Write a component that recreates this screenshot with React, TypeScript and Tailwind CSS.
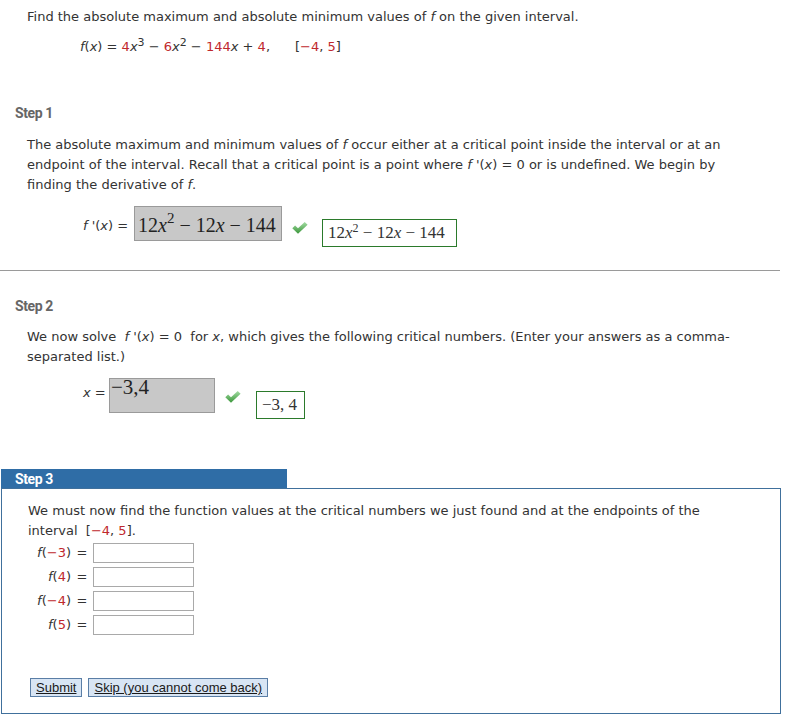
import React from "react";

const R = ({ children }: { children: React.ReactNode }) => (
  <span className="text-[#c0282d]">{children}</span>
);
const I = ({ children }: { children: React.ReactNode }) => <i>{children}</i>;

const Check = ({ className = "" }: { className?: string }) => (
  <svg width="16" height="12" viewBox="0 0 16 12" className={className}>
    <defs>
      <linearGradient id="cg" x1="0" y1="0" x2="0" y2="1">
        <stop offset="0" stopColor="#a3dca3" />
        <stop offset="1" stopColor="#3a963a" />
      </linearGradient>
    </defs>
    <path d="M0.3 6.2 L3.1 3.5 L6 6.3 L12.7 0 L15.6 2.7 L6 11.8 Z" fill="url(#cg)" />
  </svg>
);

const Heading = ({ children, className = "" }: { children: React.ReactNode; className?: string }) => (
  <div
    className={`font-bold text-[14px] tracking-[-0.4px] leading-[20px] ${className}`}
    style={{ fontFamily: "Roboto, 'Liberation Sans', sans-serif" }}
  >
    {children}
  </div>
);

const serif = { fontFamily: "'Liberation Serif', 'Times New Roman', serif" };

export default function App() {
  return (
    <div
      className="w-[795px] h-[722px] bg-white text-[#333] text-[13px] leading-[20px] overflow-hidden"
      style={{ fontFamily: "'DejaVu Sans', Verdana, sans-serif" }}
    >
      <div className="pt-[7px] pl-[27px]">
        Find the absolute maximum and absolute minimum values of <I>f</I> on the given interval.
      </div>
      <div className="mt-[10px] pl-[80px] whitespace-pre">
        <I>f</I>(<I>x</I>) = <R>4</R>
        <I>x</I>
        <sup className="text-[11px]">3</sup> − <R>6</R>
        <I>x</I>
        <sup className="text-[11px]">2</sup> − <R>144</R>
        <I>x</I> + <R>4</R>,
        <span className="ml-[25px]">
          [<R>−4</R>, <R>5</R>]
        </span>
      </div>

      {/* Step 1 */}
      <Heading className="mt-[46px] pl-[15px] text-[#666]">Step 1</Heading>
      <div className="mt-[12px] pl-[27px]">
        The absolute maximum and minimum values of <I>f</I> occur either at a critical point inside the interval or at an
        <br />
        endpoint of the interval. Recall that a critical point is a point where <I>f</I> '(<I>x</I>) = 0 or is undefined. We begin by
        <br />
        finding the derivative of <I>f</I>.
      </div>
      <div className="mt-[11px] pl-[83px] flex items-start">
        <div className="mt-[10px] w-[51px] whitespace-pre">
          <I>f</I> '(<I>x</I>) =
        </div>
        <div
          className="w-[148px] h-[35px] bg-[#c8c8c8] border border-[#9a9a9a] pl-[3px] text-[20px] leading-[37px] text-[#222] whitespace-pre"
          style={serif}
        >
          12<I>x</I>
          <span className="relative -top-[9px] text-[15px]">2</span> − 12<I>x</I> − 144
        </div>
        <Check className="ml-[10px] mt-[16px]" />
        <div
          className="ml-[14px] mt-[13px] w-[135px] h-[28px] border border-[#2b7a2b] pl-[5px] text-[17px] leading-[26px] text-[#333] whitespace-pre"
          style={serif}
        >
          12<I>x</I>
          <span className="relative -top-[6px] text-[12px]">2</span> − 12<I>x</I> − 144
        </div>
      </div>

      <div className="mt-[23px] h-px w-[780px] bg-[#9a9a9a]" />

      {/* Step 2 */}
      <Heading className="mt-[25px] pl-[15px] text-[#666]">Step 2</Heading>
      <div className="mt-[11px] pl-[27px]">
        We now solve&nbsp; <I>f</I> '(<I>x</I>) = 0&nbsp; for <I>x</I>, which gives the following critical numbers. (Enter your answers as a comma-
        <br />
        separated list.)
      </div>
      <div className="mt-[11px] pl-[83px] flex items-start">
        <div className="mt-[5px] w-[26px] whitespace-pre">
          <I>x</I> =
        </div>
        <div
          className="w-[106px] h-[35px] bg-[#c8c8c8] border border-[#9a9a9a] pl-[1px] text-[21px] leading-[16px] text-[#222]"
          style={serif}
        >
          −3,4
        </div>
        <Check className="ml-[10px] mt-[13px]" />
        <div
          className="ml-[15px] mt-[13px] w-[49px] h-[28px] border border-[#2b7a2b] pl-[5px] text-[17px] leading-[26px] text-[#333] whitespace-pre"
          style={serif}
        >
          −3, 4
        </div>
      </div>

      {/* Step 3 */}
      <div className="mt-[50px] ml-[1px] w-[286px] h-[19px] bg-[#2f6da6] pl-[14px]">
        <Heading className="text-white leading-[19px]">Step 3</Heading>
      </div>
      <div className="ml-[1px] w-[780px] h-[226px] border border-[#40709c] pt-[12px]">
        <div className="pl-[26px]">
          We must now find the function values at the critical numbers we just found and at the endpoints of the
          <br />
          interval&nbsp; [<R>−4</R>, <R>5</R>].
        </div>
        <div className="mt-[2px] pl-[26px] flex flex-col gap-[4px]">
          {["−3", "4", "−4", "5"].map((v) => (
            <div key={v} className="flex items-center h-[20px]">
              <div className="w-[43px] text-right">
                <I>f</I>(<R>{v}</R>)
              </div>
              <div className="w-[22px] text-center">=</div>
              <div className="w-[101px] h-[20px] border border-[#a9a9a9] bg-white" />
            </div>
          ))}
        </div>
        <div
          className="mt-[43px] ml-[28px] flex gap-[6px] text-[13px]"
          style={{ fontFamily: "'Liberation Sans', Arial, sans-serif" }}
        >
          <button className="h-[19px] px-[5px] bg-[#d8e5f4] border border-[#5a7ea6] text-[#1a1a1a] underline leading-[17px]">
            Submit
          </button>
          <button className="h-[19px] px-[5px] bg-[#d8e5f4] border border-[#5a7ea6] text-[#1a1a1a] underline leading-[17px]">
            Skip (you cannot come back)
          </button>
        </div>
      </div>
    </div>
  );
}
